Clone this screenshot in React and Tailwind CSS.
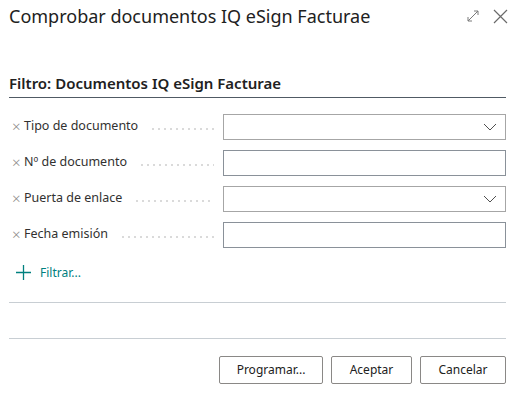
import { useState } from 'react';

const fields = [
  { label: 'Tipo de documento', select: true },
  { label: 'Nº de documento', select: false },
  { label: 'Puerta de enlace', select: true },
  { label: 'Fecha emisión', select: false },
];

const ChevronDown = () => (
  <svg width="14" height="8" viewBox="0 0 14 8" fill="none">
    <path d="M1 1l6 6 6-6" stroke="#505050" strokeWidth="1" />
  </svg>
);

const FilterRow = ({ label, select }) => {
  const [value, setValue] = useState('');
  return (
    <div className="flex items-center h-[26px]">
      <div className="flex items-center w-[205px] shrink-0 overflow-hidden">
        <span className="text-[#8a8886] text-[15px] w-[15px] pl-[3px] leading-none font-light">×</span>
        <span className="text-[12.5px] text-[#323130] whitespace-nowrap pr-[12px]">{label}</span>
        <span className="flex-1 h-[2px] translate-y-[2px] bg-[radial-gradient(circle,#d9d9d9_0.7px,transparent_1px)] bg-[length:6px_2px]"></span>
      </div>
      <div className={`ml-[9px] flex-1 h-[26px] flex items-center bg-white border ${select ? 'border-[#a6a6a6]' : 'border-[#8a9199]'}`}>
        <input
          value={value}
          onChange={(e) => setValue(e.target.value)}
          className="flex-1 min-w-0 h-full px-2 text-[13px] outline-none bg-transparent"
        />
        {select && <span className="pr-[8px] flex items-center"><ChevronDown /></span>}
      </div>
    </div>
  );
};

const App = () => {
  return (
    <div className="w-[520px] h-[395px] bg-white px-[9px] pt-[3px] text-[#212121]" style={{ fontFamily: '"Noto Sans", "Open Sans", sans-serif' }}>
      {/* Header */}
      <div className="flex items-center h-[26px]">
        <h1 className="text-[18px] text-[#212121] flex-1">Comprobar documentos IQ eSign Facturae</h1>
        <div className="flex items-center gap-[13px] pr-[3px]">
          <svg width="14" height="14" viewBox="0 0 14 14" fill="none" stroke="#7a7a7a" strokeWidth="1">
            <path d="M2 12L12 2M8 2h4v4M2 8v4h4" />
          </svg>
          <svg width="15" height="15" viewBox="0 0 15 15" fill="none" stroke="#6a6a6a" strokeWidth="1.2">
            <path d="M1 1l13 13M14 1L1 14" />
          </svg>
        </div>
      </div>

      {/* Filter header */}
      <div className="mt-[43px] border-b border-[#505a64] pb-[2px] mr-[5px]">
        <h2 className="text-[15px] font-semibold text-[#212121]">Filtro: Documentos IQ eSign Facturae</h2>
      </div>

      <div className="mt-[16px] mr-[5px] flex flex-col gap-[10px]">
        {fields.map((f) => (
          <FilterRow key={f.label} {...f} />
        ))}
      </div>

      <button className="mt-[16px] ml-[7px] h-[18px] flex items-center gap-[9px] text-[#00807f] text-[12px]">
        <svg width="15" height="15" viewBox="0 0 15 15" fill="none" stroke="#00807f" strokeWidth="1.3">
          <path d="M7.5 0v15M0 7.5h15" />
        </svg>
        Filtrar...
      </button>

      <div className="mt-[20px] border-t border-[#c8ced3] mr-[5px]"></div>
      <div className="mt-[35px] border-t border-[#c8ced3] mr-[5px]"></div>

      <div className="mt-[17px] flex justify-end gap-[8px] mr-[5px]">
        <button className="w-[104px] h-[28px] border border-[#8a8886] rounded-[2px] text-[12px] text-[#212121]">Programar...</button>
        <button className="w-[81px] h-[28px] border border-[#8a8886] rounded-[2px] text-[12px] text-[#212121]">Aceptar</button>
        <button className="w-[86px] h-[28px] border border-[#8a8886] rounded-[2px] text-[12px] text-[#212121]">Cancelar</button>
      </div>
    </div>
  );
};

export default App;
